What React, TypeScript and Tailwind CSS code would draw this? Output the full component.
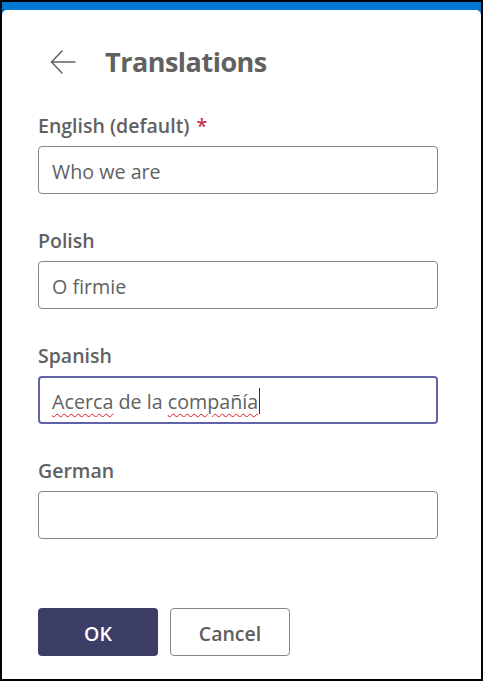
import React from "react";

function Field({ label, value, required, focused }: { label: string; value: string; required?: boolean; focused?: boolean }) {
  return (
    <div className="flex flex-col gap-[7px]">
      <div className="h-[26px] text-[19.5px] font-semibold text-[#616161] leading-[26px] whitespace-nowrap">
        {label}
        {required && <span className="text-[#c4314b] ml-[7px]">*</span>}
      </div>
      <div
        className={
          "h-[48px] rounded-[4px] bg-white flex items-center pt-[3px] text-[19.7px] text-[#616161] " +
          (focused ? "border-2 border-[#6264a7] pl-[12px]" : "border border-[#8a8886] pl-[13px]")
        }
      >
        {focused ? (
          <span className="flex items-center">
            <span className="underline decoration-wavy decoration-[#e81123] decoration-1 underline-offset-[4px]">Acerca</span>
            <span>&nbsp;de la&nbsp;</span>
            <span className="underline decoration-wavy decoration-[#e81123] decoration-1 underline-offset-[4px]">compañía</span>
            <span className="w-[1px] h-[26px] bg-[#333] ml-[1px]" />
          </span>
        ) : (
          <span>{value}</span>
        )}
      </div>
    </div>
  );
}

export default function App() {
  return (
    <div className="w-[483px] h-[681px] bg-black p-[2px]" style={{ fontFamily: '"Open Sans", "Noto Sans", sans-serif' }}>
      <div className="w-full h-full bg-[#0078d4] pt-[8px]">
        <div className="w-full h-full bg-white rounded-t-[5px] pl-[36px] pr-[43px] pt-[32px] flex flex-col">
          <div className="flex items-center h-[40px]">
            <svg width="26" height="24" viewBox="0 0 26 24" className="ml-[12px]" fill="none" stroke="#616161" strokeWidth="1.5" strokeLinecap="round" strokeLinejoin="round">
              <path d="M25 12H2M12 1L1.5 12L12 23" />
            </svg>
            <div className="ml-[29px] text-[27px] font-bold text-[#616161] tracking-[-0.5px]">Translations</div>
          </div>
          <div className="mt-[31px] flex flex-col gap-[34px]">
            <Field label="English (default)" value="Who we are" required />
            <Field label="Polish" value="O firmie" />
            <Field label="Spanish" value="Acerca de la compañía" focused />
            <Field label="German" value="" />
          </div>
          <div className="mt-[69px] flex gap-[12px]">
            <button className="w-[120px] h-[48px] pt-[3px] rounded-[4px] bg-[#3d3e66] text-white text-[19.5px] font-semibold">OK</button>
            <button className="w-[120px] h-[48px] pt-[3px] rounded-[4px] bg-white border border-[#8a8886] text-[#605e5c] text-[19.5px] font-semibold">Cancel</button>
          </div>
        </div>
      </div>
    </div>
  );
}
